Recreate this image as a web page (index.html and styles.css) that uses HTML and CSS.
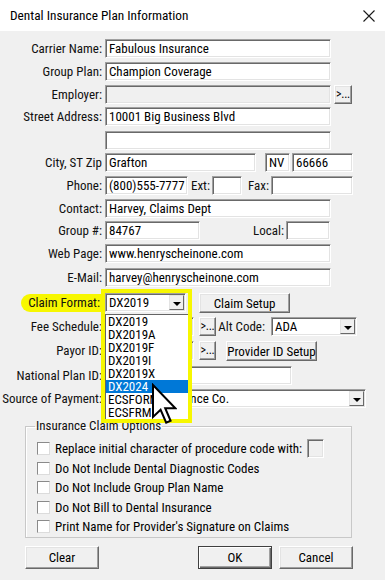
FILE: index.html
```html
<!DOCTYPE html>
<html lang="en">
<head>
<meta charset="utf-8">
<title>Dental Insurance Plan Information</title>
<link rel="stylesheet" href="styles.css">
</head>
<body>
<div class="window">
  <header class="titlebar">
    <span class="title">Dental Insurance Plan Information</span>
    <svg class="close" width="12" height="12" viewBox="0 0 12 12"><path d="M0.5 0.5 L11.5 11.5 M11.5 0.5 L0.5 11.5" stroke="#1a1a1a" stroke-width="1.1" fill="none"/></svg>
  </header>
  <main class="content">
    <div class="form">
      <label class="lbl">Carrier Name:</label>
      <div class="ctl"><div class="field w226">Fabulous Insurance</div></div>

      <label class="lbl">Group Plan:</label>
      <div class="ctl"><div class="field w226">Champion Coverage</div></div>

      <label class="lbl">Employer:</label>
      <div class="ctl"><div class="field disabled w226"></div><button class="btn small ml3 w18">&gt;...</button></div>

      <label class="lbl">Street Address:</label>
      <div class="ctl"><div class="field w226">10001 Big Business Blvd</div></div>

      <label class="lbl"></label>
      <div class="ctl"><div class="field w226"></div></div>

      <label class="lbl">City, ST Zip</label>
      <div class="ctl"><div class="field w151">Grafton</div><div class="field ml9 w25">NV</div><div class="field ml2 w61">66666</div></div>

      <label class="lbl">Phone:</label>
      <div class="ctl"><div class="field w83">(800)555-7777</div><span class="sublbl w24">Ext:</span><div class="field w30"></div><span class="sublbl w29">Fax:</span><div class="field w82"></div></div>

      <label class="lbl">Contact:</label>
      <div class="ctl"><div class="field w226">Harvey, Claims Dept</div></div>

      <label class="lbl">Group #:</label>
      <div class="ctl"><div class="field w95">84767</div><span class="sublbl w86">Local:</span><div class="field w44"></div></div>

      <label class="lbl">Web Page:</label>
      <div class="ctl"><div class="field w226">www.henryscheinone.com</div></div>

      <label class="lbl">E-Mail:</label>
      <div class="ctl"><div class="field w226">harvey@henryscheinone.com</div></div>

      <label class="lbl"><span class="marker">Claim Format:</span></label>
      <div class="ctl">
        <div class="combo-wrap w81">
          <div class="field combo">DX2019<span class="arrow"></span></div>
          <ul class="droplist">
            <li>DX2019</li>
            <li>DX2019A</li>
            <li>DX2019F</li>
            <li>DX2019I</li>
            <li>DX2019X</li>
            <li class="sel">DX2024</li>
            <li>ECSFORM</li>
            <li>ECSFRM</li>
          </ul>
          <span class="frame"></span>
          <svg class="cursor" width="26" height="42" viewBox="0 0 13 21"><path d="M1 1 L1 17 L4.8 13.4 L7.6 19.8 L9.8 18.9 L7.1 12.6 L12.2 12.6 Z" fill="#fff" stroke="#000" stroke-width="1" stroke-linejoin="miter"/></svg>
        </div>
        <button class="btn ml13 w91 tall">Claim Setup</button>
      </div>

      <label class="lbl">Fee Schedule:</label>
      <div class="ctl"><div class="field w89"></div><button class="btn small ml5 w17">&gt;...</button><span class="sublbl w55 pr6">Alt Code:</span><div class="field combo w86">ADA<span class="arrow"></span></div></div>

      <label class="lbl">Payor ID:</label>
      <div class="ctl"><div class="field w89"></div><button class="btn small ml5 w17">&gt;...</button><button class="btn ml10 w91 tall">Provider ID Setup</button></div>

      <label class="lbl">National Plan ID:</label>
      <div class="ctl"><div class="field w187"></div></div>

      <label class="lbl">Source of Payment:</label>
      <div class="ctl"><div class="field combo w261">Fabulous Insurance Co.<span class="arrow"></span></div></div>
    </div>

    <fieldset class="group">
      <legend>Insurance Claim Options</legend>
      <div class="opt"><span class="check"></span><span>Replace initial character of procedure code with:</span><span class="field disabled tiny"></span></div>
      <div class="opt"><span class="check"></span><span>Do Not Include Dental Diagnostic Codes</span></div>
      <div class="opt"><span class="check"></span><span>Do Not Include Group Plan Name</span></div>
      <div class="opt"><span class="check"></span><span>Do Not Bill to Dental Insurance</span></div>
      <div class="opt"><span class="check"></span><span>Print Name for Provider's Signature on Claims</span></div>
    </fieldset>

    <div class="actions">
      <button class="btn big">Clear</button>
      <button class="btn big default ml99">OK</button>
      <button class="btn big ml7">Cancel</button>
    </div>
  </main>
</div>
</body>
</html>
```

FILE: styles.css
```css
html, body {
  margin: 0;
  padding: 0;
  background: #f0f0f0;
}
body {
  font-family: "Roboto Condensed", "Open Sans", sans-serif;
  font-size: 13px;
  color: #000;
}
.window {
  width: 385px;
  height: 580px;
  overflow: hidden;
  background: #f0f0f0;
}
.titlebar {
  height: 31px;
  background: #fff;
  display: flex;
  align-items: center;
  justify-content: space-between;
  padding: 0 10px 0 10px;
  box-sizing: border-box;
}
.title {
  font-size: 13.3px;
  color: #000;
}
.close { margin-top: 1px; }

.content {
  padding-top: 8px;
}
.form {
  display: grid;
  grid-template-columns: 103px 1fr;
  column-gap: 2px;
  grid-template-rows: 23px 23px 22px 24px 22px 23px 23px 22px 23px 24px 25px 24px 24px 25px 23px 20px;
}
.lbl {
  text-align: right;
  line-height: 19px;
  white-space: nowrap;
  color: #111;
  padding-right: 1px;
}
.ctl {
  display: flex;
  align-items: flex-start;
  height: 19px;
}
.field {
  position: relative;
  height: 19px;
  box-sizing: border-box;
  border: 1px solid;
  border-color: #a0a0a0 #fff #fff #a0a0a0;
  box-shadow: inset 1px 1px 0 #696969, inset -1px -1px 0 #e3e3e3;
  background: #fff;
  padding: 0 3px;
  line-height: 17px;
  white-space: nowrap;
  overflow: hidden;
  flex: none;
}
.field.disabled { background: #f0f0f0; }
.sublbl {
  text-align: right;
  line-height: 19px;
  padding-right: 2px;
  box-sizing: border-box;
  flex: none;
  color: #111;
  white-space: nowrap;
}
.pr6 { padding-right: 6px; }

.btn {
  font: inherit;
  color: #000;
  height: 19px;
  box-sizing: border-box;
  border: 1px solid;
  border-color: #fff #696969 #696969 #fff;
  box-shadow: inset -1px -1px 0 #a0a0a0, inset 1px 1px 0 #e3e3e3;
  background: #f0f0f0;
  padding: 0;
  flex: none;
  line-height: 17px;
  white-space: nowrap;
}
.btn.small { font-size: 12px; letter-spacing: -0.3px; }
.btn.tall { height: 20px; }
.btn.big { height: 23px; width: 74px; }
.btn.default {
  border-color: #404040;
  box-shadow: inset 1px 1px 0 #fff, inset -1px -1px 0 #696969, inset -2px -2px 0 #a0a0a0;
}

.w17 { width: 17px; } .w18 { width: 18px; } .w24 { width: 24px; } .w25 { width: 25px; }
.w29 { width: 29px; } .w30 { width: 30px; } .w44 { width: 44px; } .w55 { width: 55px; }
.w61 { width: 61px; } .w81 { width: 81px; } .w82 { width: 82px; } .w83 { width: 83px; }
.w86 { width: 86px; } .w89 { width: 89px; } .w91 { width: 91px; } .w95 { width: 95px; }
.w151 { width: 151px; } .w187 { width: 187px; } .w226 { width: 226px; } .w261 { width: 261px; }
.ml2 { margin-left: 2px; } .ml3 { margin-left: 3px; } .ml5 { margin-left: 5px; }
.ml7 { margin-left: 7px; } .ml9 { margin-left: 9px; } .ml10 { margin-left: 10px; }
.ml13 { margin-left: 13px; } .ml99 { margin-left: 99px; }

.combo { padding-right: 18px; }
.combo .arrow {
  position: absolute;
  top: 1px;
  right: 1px;
  bottom: 1px;
  width: 15px;
  box-sizing: border-box;
  background: #f0f0f0;
  border: 1px solid;
  border-color: #e3e3e3 #696969 #696969 #e3e3e3;
}
.combo .arrow::after {
  content: "";
  position: absolute;
  left: 3px;
  top: 6px;
  border-left: 4px solid transparent;
  border-right: 4px solid transparent;
  border-top: 4px solid #000;
}

.marker {
  display: inline-block;
  background: #f7f700;
  border-radius: 10px 0 0 10px;
  padding: 0 3px 0 7px;
  margin-right: -1px;
  line-height: 18px;
  margin-top: 1px;
}
.combo-wrap {
  position: relative;
  flex: none;
  height: 19px;
}
.combo-wrap .combo { width: 81px; }
.droplist {
  position: absolute;
  top: 21px;
  left: 0;
  width: 82px;
  margin: 0;
  padding: 0;
  list-style: none;
  background: #fff;
  border: 1px solid #646464;
  z-index: 2;
  font-size: 13px;
}
.droplist li {
  height: 13px;
  line-height: 13px;
  padding-left: 2px;
  white-space: nowrap;
  overflow: hidden;
}
.droplist li.sel {
  background: #0078d7;
  color: #fff;
}
.frame {
  position: absolute;
  top: -4px;
  left: -4px;
  right: -6px;
  bottom: -111px;
  border: 4px solid #f7f700;
  z-index: 3;
  pointer-events: none;
}
.cursor {
  position: absolute;
  left: 46px;
  top: 90px;
  z-index: 4;
}

.group {
  margin: 10px 0 0 25px;
  width: 327px;
  box-sizing: border-box;
  border: 1px solid #c8c8c8;
  box-shadow: inset 1px 1px 0 #fff;
  padding: 6px 0 0 11px;
  min-width: 0;
}
.group legend {
  padding: 0 1px;
  margin-left: -2px;
  line-height: 14px;
  color: #111;
}
.opt {
  display: flex;
  align-items: center;
  height: 19.5px;
  white-space: nowrap;
}
.check {
  width: 13px;
  height: 13px;
  box-sizing: border-box;
  border: 1px solid;
  border-color: #8a8a8a #dcdcdc #dcdcdc #8a8a8a;
  background: #fff;
  margin-right: 5px;
  flex: none;
}
.field.tiny {
  width: 17px;
  margin-left: 5px;
  height: 19px;
}

.actions {
  display: flex;
  margin: 8px 0 0 25px;
}
```
